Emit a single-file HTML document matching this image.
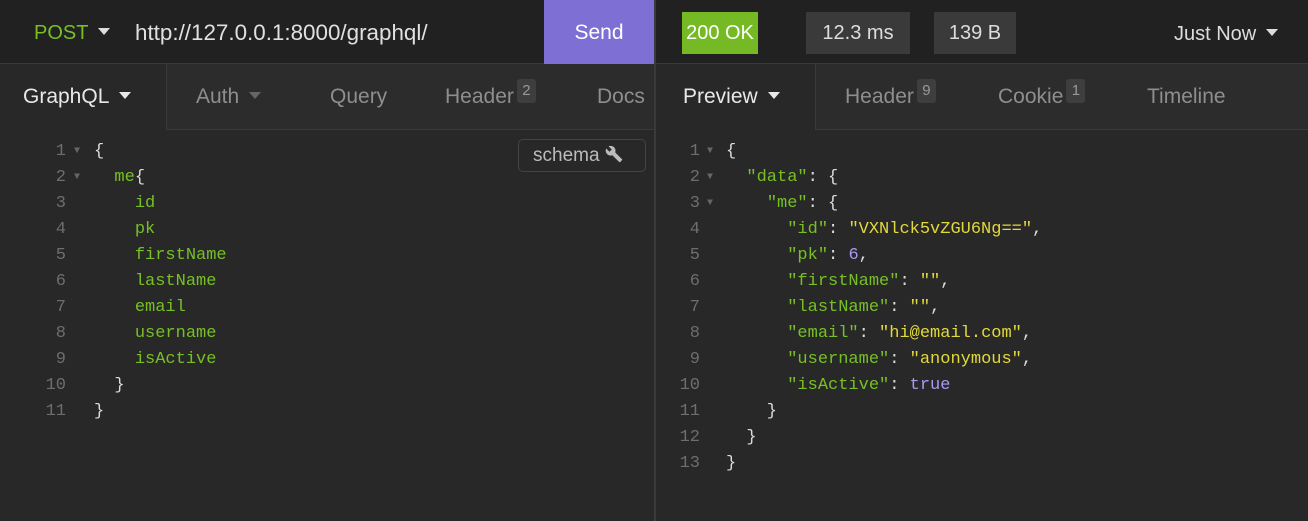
<!DOCTYPE html>
<html><head><meta charset="utf-8"><style>
*{margin:0;padding:0;box-sizing:border-box}
body{width:1308px;height:521px;background:#282828;font-family:"Liberation Sans",sans-serif;position:relative;overflow:hidden;color:#ddd}
.abs{position:absolute}
.top{left:0;top:0;width:1308px;height:64px;background:#212121;border-bottom:1px solid #3a3a3a}
.tabs{top:64px;height:66px;background:#2c2c2c;border-bottom:1px solid #3a3a3a}
.tab{position:absolute;top:0;height:65px;line-height:66px;font-size:21px;color:#8e8e8e}
.act{background:#282828;color:#e8e8e8;height:66px}
.badge{display:inline-block;background:#3e3e3e;color:#999;font-size:15px;line-height:24px;width:19px;text-align:center;border-radius:3px;vertical-align:8px;margin-left:3px}
.tri{display:inline-block;width:0;height:0;border-left:6px solid transparent;border-right:6px solid transparent;border-top:7px solid currentColor;vertical-align:4px;margin-left:10px}
.code{font-family:"Liberation Mono",monospace;font-size:17px;line-height:26px;white-space:pre}
.ln{color:#6e6e6e;text-align:right;width:24px}
.g{color:#76c024}.w{color:#ddd}.y{color:#e2d93a}.p{color:#a49cf0}
.fa{color:#666;font-size:10px}
.pill{top:12px;height:42px;line-height:42px;font-size:20px;text-align:center;background:#3a3a3a;color:#ddd}
</style></head><body>
<div class="abs top"></div>
<div class="abs" style="left:34px;top:0;height:64px;line-height:66px;font-size:20px;color:#76c024">POST<span class="tri" style="color:#ddd"></span></div>
<div class="abs" style="left:135px;top:0;height:64px;line-height:66px;font-size:22.4px;color:#e0e0e0">http://127.0.0.1:8000/graphql/</div>
<div class="abs" style="left:544px;top:0;width:110px;height:64px;background:#7d6fd3;color:#fff;font-size:21px;line-height:66px;text-align:center">Send</div>
<div class="abs" style="left:654px;top:0;width:2px;height:521px;background:#3a3a3a"></div>
<div class="abs pill" style="left:682px;width:76px;background:#75ba24;color:#fff">200 OK</div>
<div class="abs pill" style="left:806px;width:104px">12.3 ms</div>
<div class="abs pill" style="left:934px;width:82px">139 B</div>
<div class="abs" style="left:1174px;top:0;line-height:68px;font-size:20px;color:#ddd">Just Now<span class="tri"></span></div>

<div class="abs tabs" style="left:0;width:654px">
 <div class="tab act" style="left:0;width:167px;border-right:1px solid #3a3a3a;padding-left:23px">GraphQL<span class="tri"></span></div>
 <div class="tab" style="left:196px">Auth<span class="tri" style="color:#666"></span></div>
 <div class="tab" style="left:330px">Query</div>
 <div class="tab" style="left:445px">Header<span class="badge">2</span></div>
 <div class="tab" style="left:597px">Docs</div>
</div>
<div class="abs tabs" style="left:656px;width:652px">
 <div class="tab act" style="left:0;width:160px;border-right:1px solid #3a3a3a;padding-left:27px">Preview<span class="tri"></span></div>
 <div class="tab" style="left:189px">Header<span class="badge">9</span></div>
 <div class="tab" style="left:342px">Cookie<span class="badge">1</span></div>
 <div class="tab" style="left:491px">Timeline</div>
</div>

<div class="abs" style="left:518px;top:139px;width:128px;height:33px;border:1px solid #444;border-radius:5px;font-size:19px;line-height:31px;color:#bbb;padding-left:14px">schema <svg width="18" height="18" viewBox="0 0 24 24" style="vertical-align:-2px"><path d="M22.7 19l-9.1-9.1c.9-2.3.4-5-1.5-6.9-2-2-5-2.4-7.4-1.3L9 6 6 9 1.6 4.7C.4 7.1.9 10.1 2.9 12.1c1.9 1.9 4.6 2.4 6.9 1.5l9.1 9.1c.4.4 1 .4 1.4 0l2.3-2.3c.5-.4.5-1.1.1-1.4z" fill="#bbb"/></svg></div>

<div class="abs code ln" style="left:42px;top:139px">1
2
3
4
5
6
7
8
9
10
11</div>
<div class="abs code fa" style="left:74px;top:139px">▼
▼</div>
<div class="abs code" style="left:94px;top:139px"><span class="w">{</span>
  <span class="g">me</span><span class="w">{</span>
    <span class="g">id</span>
    <span class="g">pk</span>
    <span class="g">firstName</span>
    <span class="g">lastName</span>
    <span class="g">email</span>
    <span class="g">username</span>
    <span class="g">isActive</span>
  <span class="w">}</span>
<span class="w">}</span></div>

<div class="abs code ln" style="left:676px;top:139px">1
2
3
4
5
6
7
8
9
10
11
12
13</div>
<div class="abs code fa" style="left:707px;top:139px">▼
▼
▼</div>
<div class="abs code w" style="left:726px;top:139px">{
  <span class="g">"data"</span>: {
    <span class="g">"me"</span>: {
      <span class="g">"id"</span>: <span class="y">"VXNlck5vZGU6Ng=="</span>,
      <span class="g">"pk"</span>: <span class="p">6</span>,
      <span class="g">"firstName"</span>: <span class="y">""</span>,
      <span class="g">"lastName"</span>: <span class="y">""</span>,
      <span class="g">"email"</span>: <span class="y">"hi@email.com"</span>,
      <span class="g">"username"</span>: <span class="y">"anonymous"</span>,
      <span class="g">"isActive"</span>: <span class="p">true</span>
    }
  }
}</div>
</body></html>
